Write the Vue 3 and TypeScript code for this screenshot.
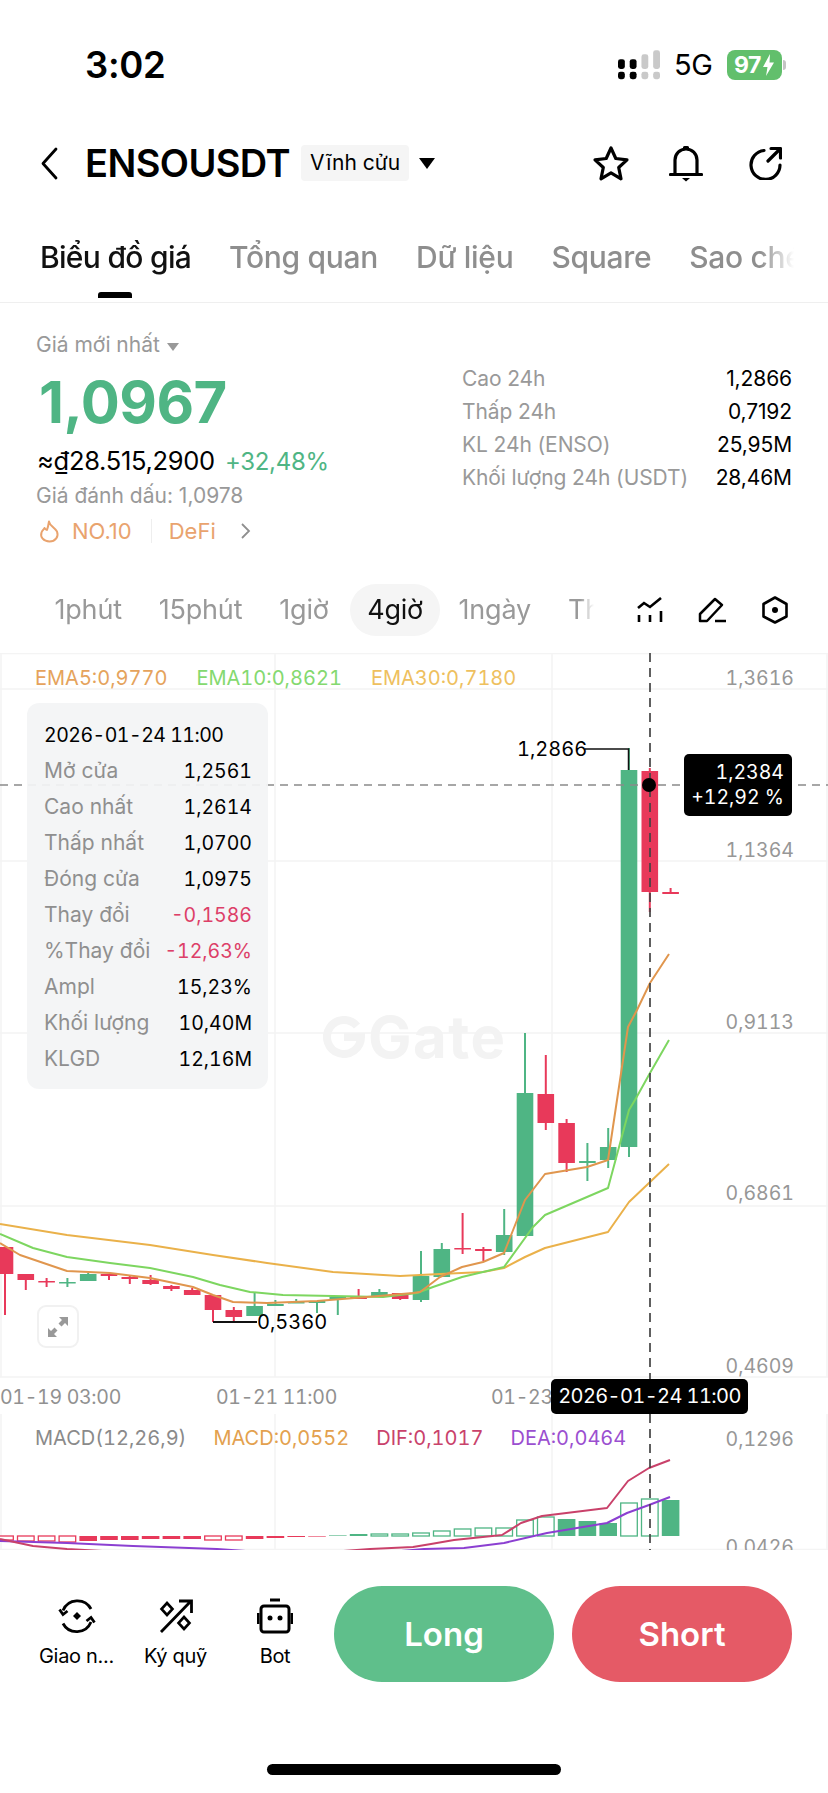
<script setup lang="ts">
interface Candle {
  high: number
  top: number
  bottom: number
  low: number
  up: boolean
}

const GREEN = '#4fb584'
const RED = '#e8395a'

// high, body top, body bottom, low, rising
const raw: [number, number, number, number, boolean][] = [
  [1247, 1247, 1274, 1315, false],
  [1274, 1274, 1280, 1290, false],
  [1278, 1281, 1282, 1287, false],
  [1278, 1282, 1283, 1287, true],
  [1273, 1274, 1281, 1281, true],
  [1274, 1274, 1276, 1280, false],
  [1275, 1277, 1279, 1284, false],
  [1275, 1280, 1284, 1285, false],
  [1285, 1286, 1289, 1291, false],
  [1288, 1290, 1295, 1295, false],
  [1295, 1295, 1310, 1322, false],
  [1307, 1310, 1317, 1322, false],
  [1293, 1306, 1316, 1316, true],
  [1300, 1304, 1306, 1306, true],
  [1299, 1302, 1303, 1303, true],
  [1301, 1301, 1303, 1313, true],
  [1297, 1297, 1299, 1315, true],
  [1289, 1297, 1299, 1299, false],
  [1289, 1292, 1297, 1297, true],
  [1293, 1293, 1299, 1300, false],
  [1251, 1276, 1300, 1302, true],
  [1243, 1249, 1277, 1277, true],
  [1213, 1248, 1249, 1254, false],
  [1247, 1249, 1251, 1261, false],
  [1209, 1235, 1252, 1255, true],
  [1033, 1093, 1236, 1236, true],
  [1055, 1094, 1123, 1130, false],
  [1119, 1123, 1163, 1172, false],
  [1143, 1161, 1163, 1181, true],
  [1128, 1147, 1160, 1168, true],
  [748, 770, 1147, 1157, true],
  [768, 771, 892, 912, false],
  [888, 892, 894, 894, false],
]

const candles = raw.map(([high, top, bottom, low, up], i): Candle & { x: number } => ({
  x: 5 + 20.8 * i,
  high,
  top,
  bottom,
  low,
  up,
}))

const ema5 = '0,1243 20,1255 67,1271 110,1273 150,1278 193,1287 213,1295 233,1302 267,1303 317,1301 367,1297 413,1293 420,1292 440,1277 462,1267 483,1262 504,1253 525,1200 545,1174 587,1167 608,1160 617,1100 628,1027 637,1010 650,983 669,954'
const ema10 = '0,1234 33,1248 67,1257 110,1263 150,1268 193,1277 220,1285 250,1292 283,1295 333,1296 383,1297 417,1293 433,1287 462,1277 504,1267 533,1227 545,1215 608,1188 629,1110 635,1100 650,1073 669,1040'
const ema30 = '0,1224 67,1235 150,1245 213,1255 267,1263 333,1272 400,1276 440,1274 483,1272 504,1268 525,1257 545,1248 608,1232 629,1202 669,1164'

const dif = '0,1539 33,1546 67,1549 120,1552 330,1552 370,1549 413,1547 431,1544 454,1540 502,1535 521,1523 542,1516 607,1508 628,1481 649,1468 670,1460'
const dea = '0,1541 67,1543 133,1546 217,1549 260,1552 390,1552 424,1549 464,1548 504,1543 547,1533 607,1523 627,1513 649,1505 670,1497'

// top and bottom of each histogram bar, solid or outlined
const macdRaw: [number, number, boolean, boolean][] = [
  [1536, 1540, false, false],
  [1536, 1541, false, false],
  [1536, 1541, false, false],
  [1536, 1542, false, false],
  [1536, 1541, true, false],
  [1536, 1540, true, false],
  [1536, 1540, true, false],
  [1536, 1539, true, false],
  [1536, 1539, true, false],
  [1536, 1539, true, false],
  [1536, 1540, false, false],
  [1536, 1540, false, false],
  [1536, 1539, true, false],
  [1536, 1538, true, false],
  [1536, 1537, true, false],
  [1536, 1536.6, true, false],
  [1535.4, 1536, true, true],
  [1534, 1536, true, true],
  [1534, 1536, false, true],
  [1534, 1536, false, true],
  [1533, 1536, false, true],
  [1531, 1536, false, true],
  [1529, 1536, false, true],
  [1528, 1536, false, true],
  [1528, 1536, false, true],
  [1520, 1536, false, true],
  [1517, 1536, false, true],
  [1519, 1536, true, true],
  [1521, 1536, true, true],
  [1523, 1536, true, true],
  [1503, 1536, false, true],
  [1499, 1536, false, true],
  [1500, 1536, true, true],
]

const macdBars = macdRaw.map(([top, bottom, solid, up], i) => ({
  x: 5 + 20.8 * i,
  top,
  bottom,
  solid,
  up,
}))

const tabs = ['Tổng quan', 'Dữ liệu', 'Square', 'Sao chép']
const stats = [
  ['Cao 24h', '1,2866'],
  ['Thấp 24h', '0,7192'],
  ['KL 24h (ENSO)', '25,95M'],
  ['Khối lượng 24h (USDT)', '28,46M'],
]
const ohlc = [
  { label: 'Mở cửa', value: '1,2561' },
  { label: 'Cao nhất', value: '1,2614' },
  { label: 'Thấp nhất', value: '1,0700' },
  { label: 'Đóng cửa', value: '1,0975' },
  { label: 'Thay đổi', value: '-0,1586', down: true },
  { label: '%Thay đổi', value: '-12,63%', down: true },
  { label: 'Ampl', value: '15,23%' },
  { label: 'Khối lượng', value: '10,40M' },
  { label: 'KLGD', value: '12,16M' },
]
const yLabels = [
  { text: '1,3616', y: 685 },
  { text: '1,1364', y: 857 },
  { text: '0,9113', y: 1029 },
  { text: '0,6861', y: 1200 },
  { text: '0,4609', y: 1373 },
]
</script>

<template>
  <div class="page">
    <div class="status">
      <span class="time">3:02</span>
      <div class="status-right">
        <svg width="42" height="30" viewBox="0 0 43 30">
          <g fill="#000">
            <rect x="0" y="9" width="7" height="10" rx="2.5" />
            <rect x="0" y="22" width="7" height="7.5" rx="2.5" />
            <rect x="12" y="9" width="7" height="10" rx="2.5" />
            <rect x="12" y="22" width="7" height="7.5" rx="2.5" />
          </g>
          <g fill="#c9c9c9">
            <rect x="24" y="4" width="7" height="15" rx="2.5" />
            <rect x="24" y="22" width="7" height="7.5" rx="2.5" />
            <rect x="36" y="0" width="7" height="19" rx="2.5" />
            <rect x="36" y="22" width="7" height="7.5" rx="2.5" />
          </g>
        </svg>
        <span class="net">5G</span>
        <div class="battery">
          <span>97</span>
          <svg width="13" height="22" viewBox="0 0 13 22"><path d="M8 0 1 13h4.500L4 22l8-13.500H7.500z" fill="#fff" /></svg>
          <i class="battery-tip"></i>
        </div>
      </div>
    </div>

    <div class="header">
      <svg class="back" width="18" height="33" viewBox="0 0 18 33"><path d="M16 2 3 16.500 16 31" fill="none" stroke="#000" stroke-width="2.800" stroke-linecap="round" stroke-linejoin="round" /></svg>
      <span class="symbol">ENSOUSDT</span>
      <span class="perp">Vĩnh cửu</span>
      <i class="caret"></i>
      <div class="header-icons">
        <svg width="38" height="36" viewBox="0 0 38 36"><path d="M19 3l4.800 10.500 11.200 1.300-8.300 7.700 2.300 11.300L19 27.900 9 33.800l2.300-11.300L3 14.800l11.200-1.300z" fill="none" stroke="#000" stroke-width="3.200" stroke-linejoin="round" /></svg>
        <svg class="bell" width="34" height="38" viewBox="0 0 34 38"><path d="M6 30V16C6 9.500 11 5 17 5s11 4.500 11 11v14M1.500 30.500h31M15.500 3.500h3" fill="none" stroke="#000" stroke-width="3.200" stroke-linecap="round" /><path d="M13 34h8l-4 3.500z" fill="#000" /></svg>
        <svg class="share" width="33" height="34" viewBox="0 0 33 34"><path d="M15 4.500A14.500 14.500 0 1 0 31 19M19 15 31 3M22 2.500h9.500V12" fill="none" stroke="#000" stroke-width="3.200" stroke-linecap="round" stroke-linejoin="round" /></svg>
      </div>
    </div>

    <div class="tabs">
      <span class="tab active">Biểu đồ giá<i class="tab-bar"></i></span>
      <span v-for="t in tabs" :key="t" class="tab">{{ t }}</span>
    </div>

    <div class="info">
      <div class="info-left">
        <div class="latest">Giá mới nhất <i class="mini-caret"></i></div>
        <div class="price">1,0967</div>
        <div class="fiat">≈₫28.515,2900<span class="pct">+32,48%</span></div>
        <div class="mark">Giá đánh dấu: 1,0978</div>
        <div class="rank">
          <svg width="21" height="23" viewBox="0 0 21 23"><path d="M10 1.500c.5 4 5 5.500 8 10 2 5-1.500 10-7.500 10S1 17 2.500 12.500C3.500 10 5 9.500 5.500 8c1 1.500 1.500 2 2.500 2 1-2.500 1.500-5.500 2-8.500z" fill="none" stroke="#e9a36e" stroke-width="2" stroke-linejoin="round" /></svg>
          <span class="rank-no">NO.10</span>
          <i class="rank-sep"></i>
          <span>DeFi</span>
          <svg class="rank-go" width="11" height="18" viewBox="0 0 11 18"><path d="M2 2l7 7-7 7" fill="none" stroke="#8f8f8f" stroke-width="1.800" /></svg>
        </div>
      </div>
      <div class="info-right">
        <div v-for="s in stats" :key="s[0]" class="stat">
          <span class="stat-label">{{ s[0] }}</span>
          <span class="stat-value">{{ s[1] }}</span>
        </div>
      </div>
    </div>

    <div class="periods">
      <div class="period-list">
        <span>1phút</span>
        <span>15phút</span>
        <span>1giờ</span>
        <span class="period-on">4giờ</span>
        <span>1ngày</span>
        <span>Thêm</span>
      </div>
      <div class="period-icons">
        <svg width="26" height="26" viewBox="0 0 26 26"><path d="M1 11l6-5 6 4 11-9M2 18v7M13 18v7M24 14v11" fill="none" stroke="#000" stroke-width="2.600" /></svg>
        <svg width="29" height="26" viewBox="0 0 29 26"><path d="M2 24v-7L17 2l7 6L9 24zM17 24h11" fill="none" stroke="#000" stroke-width="2.500" stroke-linejoin="round" /></svg>
        <svg width="26" height="28" viewBox="0 0 26 28"><path d="M13 1.500 24.500 8v12.500L13 26.500 1.500 20.500V8z" fill="none" stroke="#000" stroke-width="2.600" stroke-linejoin="round" /><circle cx="13" cy="14" r="3" fill="#000" /></svg>
      </div>
    </div>

    <div class="chart">
      <svg class="plot" width="828" height="761" viewBox="0 653 828 761">
        <g stroke="#f4f4f4" stroke-width="1.500">
          <path d="M0 653.500H828M0 689H828M0 861H828M0 1033H828M0 1206H828M0 1377H828" />
          <path d="M1 653V1377M275 653V1377M552 653V1377M827 653V1377" />
        </g>

        <g v-for="c in candles" :key="c.x" :stroke="c.up ? GREEN : RED" :fill="c.up ? GREEN : RED">
          <line :x1="c.x" :x2="c.x" :y1="c.high" :y2="c.low" stroke-width="2" />
          <rect :x="c.x - 8.300" :y="c.top" width="16.600" :height="Math.max(c.bottom - c.top, 1.500)" stroke="none" />
        </g>

        <g fill="none" stroke-width="2" stroke-linejoin="round">
          <polyline :points="ema30" stroke="#eab14a" />
          <polyline :points="ema10" stroke="#7dd660" />
          <polyline :points="ema5" stroke="#e0964e" />
        </g>

        <path d="M585 749H628.500V770" fill="none" stroke="#111" stroke-width="1.500" />
        <path d="M213 1322H257" fill="none" stroke="#111" stroke-width="2" />
        <path d="M0 785H828" stroke="#8a8a8a" stroke-width="1.500" stroke-dasharray="8 6" />
        <path d="M650 653V1379" stroke="#444" stroke-width="1.700" stroke-dasharray="9 6" />
        <circle cx="649" cy="785" r="7" fill="#000" />

        <g class="axis-y">
          <text v-for="l in yLabels" :key="l.text" x="794" :y="l.y" text-anchor="end">{{ l.text }}</text>
        </g>
        <g class="axis-x">
          <text x="0" y="1404">01-19 03:00</text>
          <text x="216" y="1404">01-21 11:00</text>
          <text x="491" y="1404">01-23</text>
        </g>
        <text class="mark-text" x="517" y="756">1,2866</text>
        <text class="mark-text" x="257" y="1329">0,5360</text>
      </svg>

      <div class="ema-row">
        <span class="ema5">EMA5:0,9770</span>
        <span class="ema10">EMA10:0,8621</span>
        <span class="ema30">EMA30:0,7180</span>
      </div>

      <div class="watermark">
        <svg width="42" height="42" viewBox="0 0 42 42"><path d="M34 10A17 17 0 1 0 38 21H21" fill="none" stroke="#f3f3f3" stroke-width="8" /></svg>
        <span>Gate</span>
      </div>

      <div class="ohlc">
        <div class="ohlc-date">2026-01-24 11:00</div>
        <div v-for="row in ohlc" :key="row.label" class="ohlc-row">
          <span class="ohlc-label">{{ row.label }}</span>
          <span :class="{ 'ohlc-down': row.down }">{{ row.value }}</span>
        </div>
      </div>

      <div class="price-tag">
        <span>1,2384</span>
        <span>+12,92 %</span>
      </div>

      <div class="expand">
        <svg width="22" height="22" viewBox="0 0 22 22" fill="#999"><path d="M21 1v9l-3-3-3.500 3.500-3-3L15 4l-3-3zM1 21v-9l3 3 3.500-3.500 3 3L7 18l3 3z" /></svg>
      </div>

      <div class="date-tag">2026-01-24 11:00</div>
    </div>

    <div class="macd">
      <svg class="plot" width="828" height="136" viewBox="0 1414 828 136">
        <path d="M1 1414V1550M275 1414V1550M552 1414V1550M827 1414V1550M0 1549.500H828" stroke="#f4f4f4" stroke-width="1.500" />
        <g v-for="b in macdBars" :key="b.x">
          <rect
            v-if="b.solid"
            :x="b.x - 8.800"
            :y="b.top"
            width="17.600"
            :height="b.bottom - b.top"
            :fill="b.up ? GREEN : RED"
          />
          <rect
            v-else
            :x="b.x - 8.300"
            :y="b.top"
            width="16.600"
            :height="b.bottom - b.top"
            fill="#fff"
            :stroke="b.up ? GREEN : RED"
            stroke-width="1.300"
          />
        </g>
        <g fill="none" stroke-width="2" stroke-linejoin="round">
          <polyline :points="dea" stroke="#8b3fd1" />
          <polyline :points="dif" stroke="#c9416a" />
        </g>
        <path d="M650 1414V1550" stroke="#444" stroke-width="1.700" stroke-dasharray="9 6" />
        <g class="axis-y">
          <text x="794" y="1446" text-anchor="end">0,1296</text>
          <text x="794" y="1554" text-anchor="end">0,0426</text>
        </g>
      </svg>
      <div class="macd-row">
        <span class="m-name">MACD(12,26,9)</span>
        <span class="m-macd">MACD:0,0552</span>
        <span class="m-dif">DIF:0,1017</span>
        <span class="m-dea">DEA:0,0464</span>
      </div>
    </div>

    <div class="actions">
      <div class="shortcut giao">
        <svg width="38" height="38" viewBox="0 0 38 38">
          <path d="M5 13.500A15.500 15.500 0 0 1 33 12M33 25A15.500 15.500 0 0 1 5 26.500M1.500 12.500 5 17.500 9.500 14M36.500 25.500 33 20.500 28.500 24" fill="none" stroke="#000" stroke-width="2.800" />
          <path d="M19 15l4 4-4 4-4-4z" fill="#000" />
        </svg>
        <span>Giao n...</span>
      </div>
      <div class="shortcut kyquy">
        <svg width="34" height="34" viewBox="0 0 34 34">
          <path d="M2 33 32 2M20 2h12.500V14" fill="none" stroke="#000" stroke-width="2.800" />
          <path d="M8 4l5.500 6L8 16l-5.500-6zM25 18l5.500 6-5.500 6-5.500-6z" fill="none" stroke="#000" stroke-width="2.600" />
        </svg>
        <span>Ký quỹ</span>
      </div>
      <div class="shortcut bot">
        <svg width="36" height="36" viewBox="0 0 36 36">
          <path d="M13 2h10" stroke="#000" stroke-width="3" />
          <rect x="4" y="8" width="28" height="26" rx="3" fill="none" stroke="#000" stroke-width="3" />
          <path d="M1 15v11M35 15v11" stroke="#000" stroke-width="3" />
          <circle cx="13" cy="20" r="2.500" fill="#000" />
          <circle cx="23" cy="20" r="2.500" fill="#000" />
        </svg>
        <span>Bot</span>
      </div>
      <button class="trade long">Long</button>
      <button class="trade short">Short</button>
    </div>

    <div class="home"><i></i></div>
  </div>
</template>

<style scoped>
.page {
  width: 828px;
  height: 1793px;
  overflow: hidden;
  background: #fff;
  color: #000;
  font-family: Inter, "Noto Sans", sans-serif;
}

.status {
  height: 130px;
  padding: 50px 46px 0 85px;
  box-sizing: border-box;
  display: flex;
  justify-content: space-between;
  align-items: flex-start;
}

.time {
  font-size: 36.500px;
  font-weight: 600;
  line-height: 30px;
  letter-spacing: -0.3px;
}

.status-right {
  display: flex;
  align-items: center;
  height: 30px;
}

.net {
  font-size: 29px;
  line-height: 30px;
  margin-left: 14px;
  width: 40px;
  letter-spacing: -0.5px;
}

.battery {
  position: relative;
  margin-left: 13px;
  width: 55px;
  height: 30px;
  border-radius: 8px;
  background: #62bf6c;
  color: #fff;
  font-size: 23px;
  font-weight: 700;
  display: flex;
  align-items: center;
  justify-content: center;
  gap: 1px;
  letter-spacing: -0.5px;
}

.battery-tip {
  position: absolute;
  right: -4px;
  top: 10px;
  width: 3px;
  height: 10px;
  border-radius: 0 3px 3px 0;
  background: #c4c4c4;
}

.header {
  height: 66px;
  padding: 0 46px 0 40px;
  display: flex;
  align-items: center;
}

.symbol {
  margin-left: 27px;
  font-size: 38px;
  font-weight: 600;
  letter-spacing: -0.6px;
}

.perp {
  margin-left: 11px;
  height: 36px;
  padding: 0 9px;
  background: #f5f5f5;
  border-radius: 4px;
  font-size: 21px;
  line-height: 36px;
}

.caret {
  margin-left: 10px;
  width: 0;
  height: 0;
  border-left: 8px solid transparent;
  border-right: 8px solid transparent;
  border-top: 11px solid #000;
}

.header-icons {
  margin-left: auto;
  display: flex;
  align-items: center;
}

.bell {
  margin-left: 39px;
}

.share {
  margin-left: 46px;
}

.tabs {
  height: 106px;
  margin-right: 34px;
  padding: 43px 0 0 40px;
  box-sizing: border-box;
  display: flex;
  gap: 38px;
  overflow: hidden;
  white-space: nowrap;
  font-size: 30px;
  font-weight: 500;
  line-height: 36px;
  color: #8e8e8e;
  -webkit-mask-image: linear-gradient(to left, transparent 0, #000 34px);
  mask-image: linear-gradient(to left, transparent 0, #000 34px);
}

.tab {
  position: relative;
  flex: none;
  letter-spacing: -0.3px;
}

.active {
  color: #111;
  letter-spacing: -0.7px;
}

.tab-bar {
  position: absolute;
  left: 58px;
  top: 53px;
  width: 34px;
  height: 6px;
  border-radius: 3px 3px 0 0;
  background: #000;
}

.info {
  border-top: 1.500px solid #efefef;
  height: 281px;
  box-sizing: border-box;
  padding: 28px 36px 0 36px;
  display: flex;
  justify-content: space-between;
}

.latest {
  font-size: 21px;
  line-height: 28px;
  color: #999;
  display: flex;
  align-items: center;
  gap: 7px;
}

.mini-caret {
  width: 0;
  height: 0;
  margin-top: 3px;
  border-left: 6px solid transparent;
  border-right: 6px solid transparent;
  border-top: 8px solid #999;
}

.price {
  margin: 11px 0 0 3px;
  font-size: 58px;
  line-height: 64px;
  font-weight: 700;
  color: #4fb584;
  letter-spacing: -0.5px;
}

.fiat {
  margin: 11px 0 0 1px;
  display: flex;
  align-items: baseline;
  font-size: 25.500px;
  line-height: 32px;
  letter-spacing: -0.3px;
}

.pct {
  margin-left: 10px;
  font-size: 24px;
  color: #4fb584;
}

.mark {
  margin-top: 4px;
  font-size: 21px;
  line-height: 28px;
  color: #999;
}

.rank {
  margin: 7px 0 0 3px;
  display: flex;
  align-items: center;
  height: 28px;
  font-size: 22px;
  color: #e9a36e;
}

.rank-no {
  margin-left: 12px;
}

.rank-sep {
  width: 1px;
  height: 24px;
  margin: 0 17px 0 19px;
  background: #eee;
}

.rank-go {
  margin-left: 24px;
}

.info-right {
  width: 330px;
  padding-top: 31px;
}

.stat {
  display: flex;
  justify-content: space-between;
  height: 33px;
  line-height: 33px;
  font-size: 21px;
  letter-spacing: -0.1px;
}

.stat-label {
  color: #999;
}

.periods {
  height: 70px;
  box-sizing: border-box;
  padding: 1px 40px 0 0;
  display: flex;
  align-items: flex-start;
}

.period-list {
  width: 594px;
  flex: none;
  overflow: hidden;
  display: flex;
  align-items: center;
  font-size: 27px;
  line-height: 52px;
  color: #999;
  padding-left: 36px;
  box-sizing: border-box;
  white-space: nowrap;
  letter-spacing: -0.2px;
  -webkit-mask-image: linear-gradient(to left, transparent 0, #000 14px);
  mask-image: linear-gradient(to left, transparent 0, #000 14px);
}

.period-list span {
  padding: 0 18.500px;
  flex: none;
}

.period-list .period-on {
  margin-left: 3px;
  padding: 0 17px;
  color: #111;
  background: #f5f5f5;
  border-radius: 26px;
}

.period-icons {
  margin-left: auto;
  display: flex;
  align-items: center;
  gap: 35px;
  height: 52px;
}

.chart {
  position: relative;
  height: 761px;
  font-variant-numeric: tabular-nums;
}

.plot {
  position: absolute;
  left: 0;
  top: 0;
  display: block;
}

.axis-y text {
  font-size: 19.500px;
  fill: #979797;
  font-variant-numeric: tabular-nums;
}

.axis-x text {
  font-size: 19.500px;
  fill: #919191;
  letter-spacing: -0.3px;
  font-variant-numeric: tabular-nums;
}

.mark-text {
  font-size: 20px;
  fill: #000;
}

.ema-row {
  position: relative;
  display: flex;
  padding: 11px 0 0 35px;
  gap: 29px;
  font-size: 20px;
  line-height: 28px;
}

.ema5 {
  color: #e5a35c;
}

.ema10 {
  color: #84d96f;
}

.ema30 {
  color: #eec05e;
}

.watermark {
  position: absolute;
  left: 323px;
  top: 361px;
  display: flex;
  align-items: center;
  gap: 3px;
  font-size: 58px;
  font-weight: 700;
  line-height: 46px;
  letter-spacing: 1.500px;
  color: #f3f3f3;
}

.ohlc {
  position: absolute;
  left: 27px;
  top: 50px;
  width: 241px;
  height: 386px;
  box-sizing: border-box;
  padding: 14px 16px 0 17px;
  background: rgba(243, 244, 245, 0.93);
  border-radius: 12px;
  font-size: 19.500px;
}

.ohlc-date {
  line-height: 36px;
  letter-spacing: -0.5px;
}

.ohlc-row {
  display: flex;
  justify-content: space-between;
  line-height: 36px;
}

.ohlc-label {
  color: #8f8f8f;
  font-size: 21px;
  font-variant-numeric: normal;
}

.ohlc-down {
  color: #dd3f68;
}

.price-tag {
  position: absolute;
  left: 684px;
  top: 101px;
  width: 108px;
  height: 62px;
  box-sizing: border-box;
  padding: 6px 8px 0 0;
  background: #000;
  border-radius: 5px;
  color: #fff;
  font-size: 19.500px;
  line-height: 25px;
  display: flex;
  flex-direction: column;
  align-items: flex-end;
}

.expand {
  position: absolute;
  left: 37px;
  top: 652px;
  width: 42px;
  height: 43px;
  box-sizing: border-box;
  border: 2px solid #f1f1f1;
  border-radius: 9px;
  background: #fff;
  display: flex;
  align-items: center;
  justify-content: center;
}

.date-tag {
  position: absolute;
  left: 551px;
  top: 726px;
  width: 197px;
  height: 35px;
  background: #000;
  border-radius: 5px;
  color: #fff;
  font-size: 20px;
  line-height: 35px;
  letter-spacing: -0.6px;
  text-align: center;
  white-space: nowrap;
}

.macd {
  position: relative;
  height: 136px;
  font-variant-numeric: tabular-nums;
}

.macd-row {
  position: relative;
  display: flex;
  padding: 10px 0 0 35px;
  gap: 27px;
  font-size: 20px;
  line-height: 28px;
}

.m-name {
  color: #8a8a8a;
}

.m-macd {
  color: #e3a14e;
}

.m-dif {
  color: #c9426b;
}

.m-dea {
  color: #9b4fd0;
}

.actions {
  height: 214px;
  padding: 36px 35px 0 38px;
  box-sizing: border-box;
  display: flex;
  align-items: flex-start;
}

.shortcut {
  display: flex;
  flex-direction: column;
  align-items: center;
  font-size: 20px;
  line-height: 26px;
  white-space: nowrap;
  letter-spacing: -0.3px;
}

.shortcut svg {
  height: 38px;
  margin: 11px 0 8px;
}

.giao {
  width: 77px;
}

.kyquy {
  width: 63px;
  margin-left: 29px;
}

.bot {
  width: 36px;
  margin-left: 50px;
}

.trade {
  width: 220px;
  height: 96px;
  border: 0;
  border-radius: 48px;
  color: #fff;
  font-family: inherit;
  font-size: 33px;
  font-weight: 600;
}

.long {
  margin-left: 41px;
  background: #5fbf8b;
}

.short {
  margin-left: 18px;
  background: #e55a66;
}

.home {
  display: flex;
  justify-content: center;
}

.home i {
  width: 294px;
  height: 11px;
  border-radius: 6px;
  background: #000;
}
</style>
